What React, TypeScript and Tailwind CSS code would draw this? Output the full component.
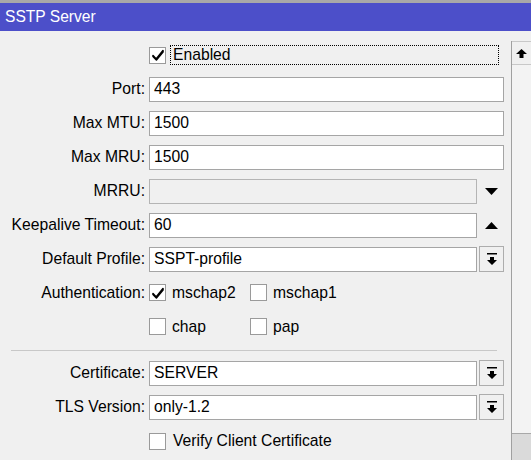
import React from 'react';

const Check = () => (
  <svg width="12" height="12" viewBox="0 0 12 12">
    <path d="M1 6.5 L4.2 10 L11 1.5 L11 3 L4.4 11 L1 7.5 Z" fill="#000" stroke="#000" strokeWidth="1.6" strokeLinejoin="round" />
  </svg>
);

const CheckBox = ({ checked }: { checked?: boolean }) => (
  <div className="w-[17px] h-[17px] border border-[#9a9a9a] bg-white flex items-center justify-center">
    {checked && <Check />}
  </div>
);

const DropIcon = () => (
  <svg width="12" height="14" viewBox="0 0 12 14">
    <rect x="1" y="1" width="10" height="1.5" fill="#000" />
    <path d="M4 5 H8 V8 H11 L6 13 L1 8 H4 Z" fill="#000" />
  </svg>
);

const Label = ({ text }: { text: string }) => (
  <div className="w-[145px] shrink-0 text-right whitespace-nowrap">{text}</div>
);

const Field = ({ value, narrow, disabled }: { value?: string; narrow?: boolean; disabled?: boolean }) => (
  <div
    className={
      (narrow ? 'w-[328px] ' : 'w-[355px] ') +
      (disabled ? 'bg-[#f0f0f0] border-[#b4b4b4] ' : 'bg-white border-[#a5a5a5] ') +
      'h-[25px] border flex items-center pl-[4px]'
    }
  >
    {value}
  </div>
);

const Row = ({ children }: { children: React.ReactNode }) => (
  <div className="flex h-[34px] items-center">{children}</div>
);

const DropButton = () => (
  <div className="ml-[2px] w-[25px] h-[26px] border border-[#adadad] bg-[#f0f0f0] flex items-center justify-center">
    <DropIcon />
  </div>
);

const App = () => {
  return (
    <div
      className="w-[531px] h-[460px] overflow-hidden bg-[#f0f0f0] text-black text-[15.7px] flex flex-col"
      style={{ fontFamily: '"Liberation Sans", Arial, sans-serif' }}
    >
      <div className="h-[3px] bg-[#a8a8a8]" />
      <div className="h-[28px] bg-[#4c4fc9] text-white text-[15.6px] flex items-center pl-[5px]">SSTP Server</div>
      <div className="flex flex-1">
        <div className="w-[511px] pt-[7px]">
          <Row>
            <div className="w-[149px] shrink-0" />
            <CheckBox checked />
            <div className="ml-[4px] w-[329px] h-[20px] border border-dotted border-black flex items-center pl-[2px]">
              Enabled
            </div>
          </Row>
          <Row>
            <Label text="Port:" />
            <div className="ml-[4px]"><Field value="443" /></div>
          </Row>
          <Row>
            <Label text="Max MTU:" />
            <div className="ml-[4px]"><Field value="1500" /></div>
          </Row>
          <Row>
            <Label text="Max MRU:" />
            <div className="ml-[4px]"><Field value="1500" /></div>
          </Row>
          <Row>
            <Label text="MRRU:" />
            <div className="ml-[4px] flex items-center">
              <Field narrow disabled />
              <svg className="ml-[8px]" width="13" height="7" viewBox="0 0 13 7">
                <path d="M0 0 H13 L6.5 7 Z" fill="#000" />
              </svg>
            </div>
          </Row>
          <Row>
            <Label text="Keepalive Timeout:" />
            <div className="ml-[4px] flex items-center">
              <Field narrow value="60" />
              <svg className="ml-[8px]" width="13" height="7" viewBox="0 0 13 7">
                <path d="M0 7 H13 L6.5 0 Z" fill="#000" />
              </svg>
            </div>
          </Row>
          <Row>
            <Label text="Default Profile:" />
            <div className="ml-[4px] flex items-center">
              <Field narrow value="SSPT-profile" />
              <DropButton />
            </div>
          </Row>
          <Row>
            <Label text="Authentication:" />
            <div className="ml-[4px] flex items-center">
              <div className="w-[101px] flex items-center">
                <CheckBox checked />
                <span className="ml-[6px]">mschap2</span>
              </div>
              <CheckBox />
              <span className="ml-[6px]">mschap1</span>
            </div>
          </Row>
          <Row>
            <div className="w-[149px] shrink-0" />
            <div className="flex items-center">
              <div className="w-[101px] flex items-center">
                <CheckBox />
                <span className="ml-[6px]">chap</span>
              </div>
              <CheckBox />
              <span className="ml-[6px]">pap</span>
            </div>
          </Row>
          <div className="h-[12px] flex items-center pl-[11px]">
            <div className="w-[486px] h-px bg-[#c8c8c8]" />
          </div>
          <Row>
            <Label text="Certificate:" />
            <div className="ml-[4px] flex items-center">
              <Field narrow value="SERVER" />
              <DropButton />
            </div>
          </Row>
          <Row>
            <Label text="TLS Version:" />
            <div className="ml-[4px] flex items-center">
              <Field narrow value="only-1.2" />
              <DropButton />
            </div>
          </Row>
          <Row>
            <div className="w-[149px] shrink-0" />
            <CheckBox />
            <span className="ml-[7px]">Verify Client Certificate</span>
          </Row>
        </div>
        <div className="flex-1 flex flex-col border-l border-[#a0a0a0] mt-[10px]">
          <div className="h-[24px] border-t border-b border-[#c8c8c8] bg-[#f0f0f0] flex items-center justify-center">
            <svg width="11" height="9" viewBox="0 0 11 9">
              <path d="M5.5 0 L11 5 H7.5 V9 H3.5 V5 H0 Z" fill="#000" />
            </svg>
          </div>
          <div className="flex-1 bg-[#f3f3f3]" />
          <div className="h-[27px] border-t border-[#a8a8a8] bg-[#dadada]" />
        </div>
      </div>
    </div>
  );
};

export default App;
